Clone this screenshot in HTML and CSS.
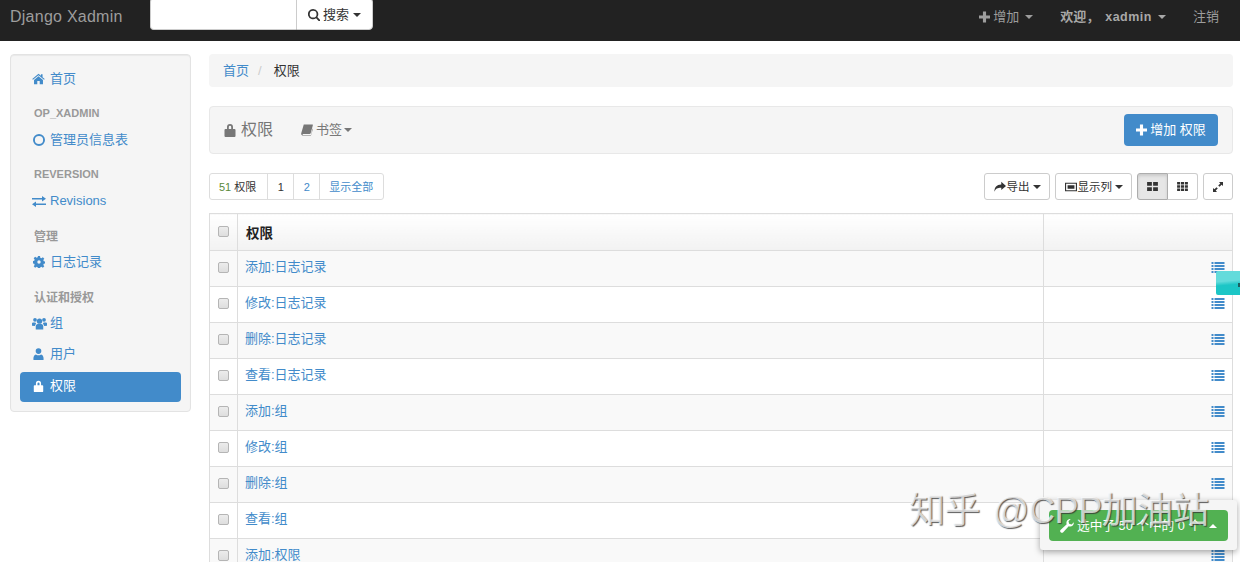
FILE: index.html
```html
<!DOCTYPE html>
<html lang="zh">
<head>
<meta charset="utf-8">
<title>权限</title>
<link rel="stylesheet" href="styles.css">
</head>
<body>
<svg class="defs" aria-hidden="true">
  <symbol id="i-home" viewBox="0 0 16 14"><path d="M8 0.500 0.300 7l.9 1L8 2.400 14.800 8l.9-1-2.700-2.300V1h-2v2L8 .5zM8 3.600 2.500 8.200V13.500h4V9.500h3v4h4V8.200z"/></symbol>
  <symbol id="i-lock" viewBox="0 0 12 14"><path d="M3 6V4a3 3 0 0 1 6 0v2h1.500a1 1 0 0 1 1 1v6a1 1 0 0 1-1 1h-9a1 1 0 0 1-1-1V7a1 1 0 0 1 1-1zM4.800 6h2.400V4a1.200 1.200 0 0 0-2.400 0z"/></symbol>
  <symbol id="i-circle" viewBox="0 0 14 14"><path fill-rule="evenodd" d="M7 0a7 7 0 1 1 0 14A7 7 0 0 1 7 0zm0 2.200a4.800 4.800 0 1 0 0 9.600 4.800 4.800 0 0 0 0-9.600z"/></symbol>
  <symbol id="i-exchange" viewBox="0 0 14 12"><path d="M0 3h10V1l4 2.800-4 2.700V4.500H0zM14 8.500H4v-2L0 9.200 4 12v-2h10z"/></symbol>
  <symbol id="i-cog" viewBox="0 0 14 14"><path fill-rule="evenodd" d="M5.800 0h2.400l.3 2 1.300.6 1.700-1.200 1.700 1.700-1.200 1.700.6 1.300 2 .3v2.400l-2 .3-.6 1.300 1.200 1.700-1.700 1.700-1.700-1.200-1.300.6-.3 2H5.800l-.3-2-1.300-.6-1.700 1.200-1.700-1.700 1.200-1.700-.6-1.300-2-.3V5.900l2-.3.6-1.300-1.200-1.700 1.700-1.700 1.700 1.200 1.300-.6zM7 5a2 2 0 1 0 0 4 2 2 0 0 0 0-4z"/></symbol>
  <symbol id="i-group" viewBox="0 0 16 13"><circle cx="3.200" cy="2.600" r="2"/><circle cx="12.800" cy="2.600" r="2"/><circle cx="8" cy="4" r="2.800"/><path d="M0 9V6.500c0-.7.800-1 1.500-1h2l.8 1L3 9.200zM16 9V6.500c0-.7-.8-1-1.500-1h-2l-.8 1L13 9.200zM4 13V9.500c0-1.500 1-2.500 2-2.500h4c1 0 2 1 2 2.500V13z"/></symbol>
  <symbol id="i-user" viewBox="0 0 12 14"><circle cx="6" cy="3.600" r="3.300"/><path d="M.5 14c-.3 0-.5-.2-.5-.5C0 10 1 7.500 3 7.500c1 .8 2 1.100 3 1.100s2-.3 3-1.100c2 0 3 2.500 3 6 0 .3-.2.5-.5.500z"/></symbol>
  <symbol id="i-search" viewBox="0 0 14 14"><path fill-rule="evenodd" d="M6 0a6 6 0 0 1 4.900 9.400l3 3a1 1 0 0 1-1.500 1.500l-3-3A6 6 0 1 1 6 0zm0 2a4 4 0 1 0 0 8 4 4 0 0 0 0-8z"/></symbol>
  <symbol id="i-plus" viewBox="0 0 12 12"><path d="M4.300 0h3.400v4.300H12v3.400H7.700V12H4.300V7.700H0V4.300h4.300z"/></symbol>
  <symbol id="i-book" viewBox="0 0 13 12"><path d="M3 0h9.500c.4 0 .5.300.4.700L10.500 9.500c-.2.600-.6.800-1.200.8H2.500c-.5 0-.9.500-.7.800.1.200.4.300.7.300h8.300l1.700-7c.2.200.4.400.3.800l-1.800 6.200c-.1.400-.4.600-.8.600H2.200C1 12 .2 11 .2 10c0-.3.100-.6.200-.9z"/></symbol>
  <symbol id="i-share" viewBox="0 0 14 12"><path d="M8.500 0 14 4.800 8.500 9.500V6.800C4 6.800 2 7.800.5 11.500.5 6 3 3.200 8.500 3z"/></symbol>
  <symbol id="i-columns" viewBox="0 0 14 12"><path fill-rule="evenodd" d="M0 1h14v10H0zm1.300 1.300v7.400h11.400V2.300zM3 4h8v4H3z"/></symbol>
  <symbol id="i-large" viewBox="0 0 12 10"><path d="M0 0h5.300v4.300H0zM6.700 0H12v4.300H6.700zM0 5.700h5.300V10H0zM6.700 5.700H12V10H6.700z"/></symbol>
  <symbol id="i-th" viewBox="0 0 12 10"><path d="M0 0h3.400v2.700H0zM4.300 0h3.400v2.700H4.300zM8.600 0H12v2.700H8.600zM0 3.600h3.400v2.700H0zM4.300 3.600h3.400v2.700H4.300zM8.600 3.600H12v2.700H8.600zM0 7.300h3.400V10H0zM4.300 7.300h3.400V10H4.300zM8.600 7.300H12V10H8.600z"/></symbol>
  <symbol id="i-expand" viewBox="0 0 10 10"><path d="M6 0h4v4L8.600 2.700 6.500 4.800 5.200 3.500 7.300 1.400zM0 10V6l1.400 1.300 2.100-2.100 1.300 1.300-2.100 2.100L4 10z"/></symbol>
  <symbol id="i-list" viewBox="0 0 13 11"><path d="M0 0h2v2H0zM3 0h10v2H3zM0 3h2v2H0zM3 3h10v2H3zM0 6h2v2H0zM3 6h10v2H3zM0 9h2v2H0zM3 9h10v2H3z"/></symbol>
  <symbol id="i-wrench" viewBox="0 0 14 14"><path d="M13.800 3.200c.3 2.300-1.500 4.300-3.700 4.300-.5 0-1-.1-1.400-.3L3 13.400a1.800 1.800 0 0 1-2.500-2.500l6.200-5.700c-.2-.5-.3-.9-.3-1.400C6.400 1.500 8.400-.3 10.700 0L8.500 2.300l.6 2.500 2.500.6z"/></symbol>
</svg>

<header class="navbar">
  <a class="brand">Django Xadmin</a>
  <form class="search">
    <input class="search-input" type="text" aria-label="搜索">
    <button class="search-btn" type="button"><svg class="ic ic-12"><use href="#i-search"/></svg>搜索<span class="caret"></span></button>
  </form>
  <nav class="nav-right">
    <a class="nav-item"><svg class="ic ic-11"><use href="#i-plus"/></svg>增加<span class="caret"></span></a>
    <a class="nav-item nav-user">欢迎，<span class="nav-name">xadmin</span><span class="caret"></span></a>
    <a class="nav-item">注销</a>
  </nav>
</header>

<div class="page">
  <aside class="sidebar">
    <a class="side-link"><svg class="ic ic-home"><use href="#i-home"/></svg>首页</a>
    <div class="side-head side-latin">OP_XADMIN</div>
    <a class="side-link"><svg class="ic ic-circle"><use href="#i-circle"/></svg>管理员信息表</a>
    <div class="side-head side-latin">REVERSION</div>
    <a class="side-link"><svg class="ic ic-ex"><use href="#i-exchange"/></svg>Revisions</a>
    <div class="side-head">管理</div>
    <a class="side-link"><svg class="ic ic-cog"><use href="#i-cog"/></svg>日志记录</a>
    <div class="side-head">认证和授权</div>
    <a class="side-link"><svg class="ic ic-group"><use href="#i-group"/></svg>组</a>
    <a class="side-link"><svg class="ic ic-user"><use href="#i-user"/></svg>用户</a>
    <a class="side-link side-active"><svg class="ic ic-user"><use href="#i-lock"/></svg>权限</a>
  </aside>

  <main class="main">
    <div class="crumb"><a>首页</a><span class="crumb-sep">/</span><span>权限</span></div>

    <section class="title-bar">
      <h1 class="title"><svg class="ic ic-title"><use href="#i-lock"/></svg>权限</h1>
      <a class="bookmark"><svg class="ic ic-12"><use href="#i-book"/></svg>书签<span class="caret"></span></a>
      <a class="btn-add"><svg class="ic ic-11"><use href="#i-plus"/></svg>增加 权限</a>
    </section>

    <div class="toolbar">
      <div class="pager">
        <span class="pager-item pager-count"><span class="count">51</span> 权限</span>
        <span class="pager-item pager-num">1</span>
        <a class="pager-item pager-num pager-link">2</a>
        <a class="pager-item pager-link pager-all">显示全部</a>
      </div>
      <div class="tools">
        <button class="tool" type="button"><svg class="ic ic-12"><use href="#i-share"/></svg>导出<span class="caret"></span></button>
        <button class="tool" type="button"><svg class="ic ic-12"><use href="#i-columns"/></svg>显示列<span class="caret"></span></button>
        <div class="tool-group">
          <button class="tool tool-sq tool-on" type="button"><svg class="ic ic-large"><use href="#i-large"/></svg></button>
          <button class="tool tool-sq" type="button"><svg class="ic ic-large"><use href="#i-th"/></svg></button>
        </div>
        <button class="tool tool-sq tool-full" type="button"><svg class="ic ic-expand"><use href="#i-expand"/></svg></button>
      </div>
    </div>

    <table class="grid">
      <thead>
        <tr><th class="c-check"><span class="check"></span></th><th class="c-name">权限</th><th class="c-act"></th></tr>
      </thead>
      <tbody>
        <tr class="odd"><td class="c-check"><span class="check"></span></td><td class="c-name"><a>添加:日志记录</a></td><td class="c-act"><svg class="ic ic-list"><use href="#i-list"/></svg></td></tr>
        <tr><td class="c-check"><span class="check"></span></td><td class="c-name"><a>修改:日志记录</a></td><td class="c-act"><svg class="ic ic-list"><use href="#i-list"/></svg></td></tr>
        <tr class="odd"><td class="c-check"><span class="check"></span></td><td class="c-name"><a>删除:日志记录</a></td><td class="c-act"><svg class="ic ic-list"><use href="#i-list"/></svg></td></tr>
        <tr><td class="c-check"><span class="check"></span></td><td class="c-name"><a>查看:日志记录</a></td><td class="c-act"><svg class="ic ic-list"><use href="#i-list"/></svg></td></tr>
        <tr class="odd"><td class="c-check"><span class="check"></span></td><td class="c-name"><a>添加:组</a></td><td class="c-act"><svg class="ic ic-list"><use href="#i-list"/></svg></td></tr>
        <tr><td class="c-check"><span class="check"></span></td><td class="c-name"><a>修改:组</a></td><td class="c-act"><svg class="ic ic-list"><use href="#i-list"/></svg></td></tr>
        <tr class="odd"><td class="c-check"><span class="check"></span></td><td class="c-name"><a>删除:组</a></td><td class="c-act"><svg class="ic ic-list"><use href="#i-list"/></svg></td></tr>
        <tr><td class="c-check"><span class="check"></span></td><td class="c-name"><a>查看:组</a></td><td class="c-act"><svg class="ic ic-list"><use href="#i-list"/></svg></td></tr>
        <tr class="odd"><td class="c-check"><span class="check"></span></td><td class="c-name"><a>添加:权限</a></td><td class="c-act"><svg class="ic ic-list"><use href="#i-list"/></svg></td></tr>
      </tbody>
    </table>
  </main>
</div>

<div class="teal-tab"></div>
<div class="action-float">
  <button class="action-btn" type="button"><svg class="ic ic-wrench"><use href="#i-wrench"/></svg>选中了 50 个中的 0 个<span class="caret caret-up"></span></button>
</div>
<div class="watermark">知乎 @CPP加油站</div>
</body>
</html>
```

FILE: styles.css
```css
* { box-sizing: border-box; }
html, body { height: 562px; overflow: hidden; }
body {
  margin: 0;
  background: #fff;
  color: #333;
  font-family: "Liberation Sans", "Noto Sans CJK SC", sans-serif;
  font-size: 14px;
  line-height: 20px;
}
.defs { display: none; }
.ic { fill: currentColor; flex: none; display: inline-block; }
.ic-11 { width: 11px; height: 12px; }
.ic-12 { width: 12px; height: 12px; }
.ic-wrench { width: 14px; height: 14px; }
.ic-title { width: 12px; height: 14px; }
.ic-large { width: 11px; height: 9px; }
.ic-expand { width: 10px; height: 10px; }
.ic-list { width: 14px; height: 11px; }
.caret {
  display: inline-block;
  width: 0;
  height: 0;
  margin-left: 4px;
  border-top: 4px solid currentColor;
  border-left: 4px solid transparent;
  border-right: 4px solid transparent;
}
.caret-up { border-top: 0; border-bottom: 4px solid currentColor; margin-left: 5px; }

/* navbar */
.navbar {
  height: 41px;
  background: #222;
  display: flex;
  align-items: flex-start;
  color: #9d9d9d;
}
.brand {
  margin: 5px 0 0 10px;
  width: 140px;
  font-size: 16px;
  line-height: 24px;
  letter-spacing: .25px;
  color: #9d9d9d;
  white-space: nowrap;
}
.search { display: flex; margin-top: -2px; height: 32px; }
.search-input {
  width: 146px;
  height: 32px;
  border: 1px solid #ccc;
  border-right: 0;
  border-radius: 4px 0 0 4px;
  background: #fff;
  padding: 0;
}
.search-btn {
  width: 77px;
  height: 32px;
  border: 1px solid #ccc;
  border-radius: 0 4px 4px 0;
  background: #fff;
  color: #333;
  font: inherit;
  font-size: 13px;
  display: flex;
  align-items: center;
  justify-content: center;
  padding: 2px 0 0;
  gap: 3px;
}
.search-btn .caret { margin-left: 1px; }
.nav-right {
  margin-left: auto;
  display: flex;
  padding: 6px 21px 0 0;
  font-size: 13px;
}
.nav-item {
  display: flex;
  align-items: center;
  height: 22px;
  color: #9d9d9d;
  margin-left: 27px;
  white-space: nowrap;
}
.nav-item .ic { margin-right: 3px; }
.nav-item .caret { margin-left: 6px; }
.nav-user { color: #a8a8a8; font-weight: 700; }
.nav-name { font-size: 12.500px; letter-spacing: .5px; margin-left: 6px; }

/* page */
.page {
  display: flex;
  align-items: flex-start;
  padding: 13px 7px 0 10px;
  gap: 18px;
}

/* sidebar */
.sidebar {
  width: 181px;
  height: 358px;
  flex: none;
  background: #f5f5f5;
  border: 1px solid #e3e3e3;
  border-radius: 4px;
  padding: 9px 9px 0;
  display: flex;
  flex-direction: column;
  box-shadow: inset 0 1px 1px rgba(0,0,0,.05);
}
.side-link {
  height: 31px;
  display: flex;
  align-items: center;
  padding: 0 0 1px 12px;
  color: #428bca;
  font-size: 13px;
  border-radius: 4px;
  flex: none;
}
.ic-home { width: 13px; height: 12px; margin-right: 5px; }
.ic-circle { width: 12px; height: 12px; margin: 0 5px 0 1px; }
.ic-ex { width: 14px; height: 12px; margin-right: 4px; }
.ic-cog { width: 12px; height: 12px; margin: 0 5px 0 1px; }
.ic-group { width: 15px; height: 13px; margin-right: 3px; }
.ic-user { width: 11px; height: 12px; margin: 0 6px 0 1px; }
.side-head {
  color: #999;
  font-size: 12px;
  font-weight: 700;
  line-height: 22px;
  margin: 9px 0 2px;
  padding: 0 0 0 14px;
  height: 19px;
  flex: none;
}
.side-latin { font-size: 11px; line-height: 19px; }
.side-active {
  height: 30px;
  margin-top: 1.500px;
  background: #428bca;
  color: #fff;
}

/* main */
.main { flex: 1; min-width: 0; }
.crumb {
  height: 33px;
  background: #f5f5f5;
  border-radius: 4px;
  padding: 0 14px;
  display: flex;
  align-items: center;
  font-size: 13px;
  color: #333;
}
.crumb a { color: #428bca; }
.crumb-sep { color: #ccc; margin: 0 12px 0 9px; }
.title-bar {
  margin-top: 19px;
  height: 48px;
  background: #f5f5f5;
  border: 1px solid #e8e8e8;
  border-radius: 4px;
  display: flex;
  align-items: center;
  padding: 0 14px;
}
.title {
  margin: 0;
  font-size: 16px;
  font-weight: 400;
  color: #777;
  display: flex;
  align-items: center;
  gap: 5px;
  width: 77px;
}
.bookmark {
  display: flex;
  align-items: center;
  gap: 3px;
  font-size: 13px;
  color: #777;
}
.bookmark .caret { margin-left: -1px; }
.btn-add {
  margin-left: auto;
  height: 32px;
  width: 94px;
  background: #428bca;
  border-radius: 4px;
  color: #fff;
  font-size: 13px;
  display: flex;
  align-items: center;
  justify-content: center;
  gap: 3px;
}
.toolbar {
  margin-top: 19px;
  height: 27px;
  display: flex;
  justify-content: space-between;
}
.pager {
  display: flex;
  font-size: 11px;
  height: 27px;
  border: 1px solid #ddd;
  border-radius: 3px;
}
.pager-item {
  display: flex;
  align-items: center;
  justify-content: center;
  padding: 0 9px;
  border-left: 1px solid #ddd;
  white-space: pre;
}
.pager-count { border-left: 0; padding-right: 11px; }
.pager-num { width: 26px; padding: 0; }
.pager-all { padding-right: 10px; }
.pager-link { color: #428bca; }
.count { color: #5a8a3a; }
.tools { display: flex; gap: 5px; }
.tool {
  height: 27px;
  border: 1px solid #ccc;
  border-radius: 3px;
  background: #fff;
  color: #333;
  font: inherit;
  font-size: 11.500px;
  padding: 0 8px 0 9px;
  display: flex;
  align-items: center;
  gap: 1px;
}
.tool .caret { margin-left: 2px; }
.tool-sq { width: 31px; padding: 0; justify-content: center; }
.tool-group { display: flex; }
.tool-group .tool { width: 30.500px; }
.tool-group .tool:first-child { border-radius: 3px 0 0 3px; }
.tool-group .tool:last-child { border-radius: 0 3px 3px 0; border-left: 0; }
.tool-on { background: #e6e6e6; border-color: #adadad; box-shadow: inset 0 2px 3px rgba(0,0,0,.12); }
.tool-full { width: 30px; }

/* table */
.grid {
  margin-top: 13px;
  width: 100%;
  table-layout: fixed;
  border-collapse: collapse;
  border: 1px solid #ddd;
}
.grid th, .grid td { border: 1px solid #ddd; padding: 0; height: 36px; }
.grid thead th {
  background: linear-gradient(#fff, #f2f2f2);
  height: 37px;
  font-size: 13.500px;
  text-align: left;
  color: #222;
}
.grid .c-check { width: 28px; }
.grid .c-act { width: 189px; padding-right: 7px; }
.grid .c-name { padding: 0 0 3px 7px; font-size: 13px; }
.grid thead .c-name { padding: 3px 0 0 8px; font-size: 13.500px; }
.grid a { color: #428bca; }
.grid tr.odd td { background: #f9f9f9; }
.c-act .ic { color: #428bca; display: block; margin: -2px 0 0 auto; }
.check {
  display: block;
  width: 11px;
  height: 11px;
  margin: -2px auto 0;
  border: 1px solid #b5b5b5;
  border-radius: 2px;
  background: linear-gradient(#ececec, #dedede);
}

/* overlays */
.teal-tab {
  position: absolute;
  left: 1216px;
  top: 271px;
  width: 24px;
  height: 24px;
  background: linear-gradient(175deg, #63dbdb 0 42%, #1cc6c6 58%);
  border-radius: 2px 0 0 2px;
}
.teal-tab::after {
  content: "";
  position: absolute;
  right: 0;
  top: 12px;
  width: 2px;
  height: 4px;
  background: #1f5f60;
}
.action-float {
  position: absolute;
  left: 1040px;
  top: 500px;
  width: 197px;
  height: 50px;
  padding: 10px 9px 0;
  background: #f5f5f5;
  border-radius: 3px;
  box-shadow: 0 2px 6px rgba(0,0,0,.35);
}
.action-btn {
  width: 179px;
  height: 31px;
  border: 0;
  border-radius: 4px;
  background: #52b152;
  color: #fff;
  font: inherit;
  font-size: 12.700px;
  display: flex;
  align-items: center;
  padding: 0 0 0 11px;
  gap: 3px;
  white-space: nowrap;
}
.watermark {
  position: absolute;
  left: 909px;
  top: 488px;
  font-size: 36px;
  line-height: 46px;
  letter-spacing: -.4px;
  word-spacing: 3px;
  white-space: nowrap;
  color: rgba(255,255,255,.72);
  text-shadow: 1px 1px 1px rgba(50,50,50,.8);
}
```
